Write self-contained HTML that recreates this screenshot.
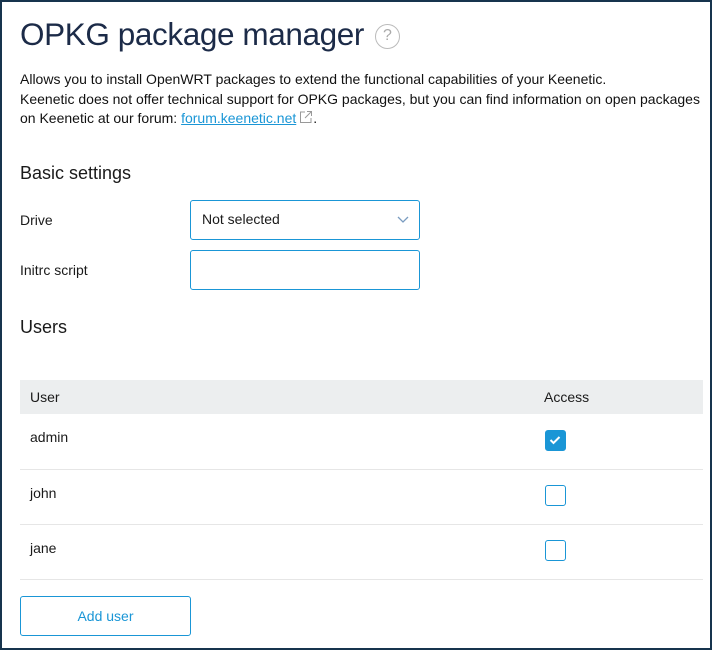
<!DOCTYPE html>
<html><head><meta charset="utf-8"><style>
*{box-sizing:border-box;margin:0;padding:0}
html,body{width:712px;height:650px;overflow:hidden}
body{background:#fff;border:2px solid #17344d;font-family:"Liberation Sans",sans-serif;color:#1a1a1a;position:relative}
.a{position:absolute}
h1{position:absolute;left:18px;top:14px;font-size:31.5px;font-weight:400;color:#1c2b48;letter-spacing:-0.4px;white-space:nowrap}
.q{position:absolute;left:373px;top:22px;width:25px;height:25px;border:1.5px solid #bbb;border-radius:50%;color:#aaa;font-size:16px;text-align:center;line-height:22px}
.p{left:18px;top:68px;font-size:14px;line-height:19.5px;color:#111;white-space:nowrap}
.p a{color:#1a96d6;text-decoration:underline}
h2{position:absolute;font-size:18px;font-weight:400;color:#1a1a1a}
.l{font-size:14px}
.box{position:absolute;left:188px;width:230px;height:40px;border:1px solid #1a96d6;border-radius:3px;font-size:14px;padding:10px 11px}
.th{left:18px;top:378px;width:683px;height:34px;background:#eceeef}
.row{left:18px;width:683px;border-bottom:1px solid #e6e6e6}
.cb{position:absolute;left:543px;width:21px;height:21px;border:1.5px solid #1a96d6;border-radius:3px}
.btn{left:18px;top:594px;width:171px;height:40px;border:1px solid #1a96d6;border-radius:3px;color:#1a96d6;font-size:14px;text-align:center;line-height:38px}
</style></head><body>
<h1>OPKG package manager</h1>
<div class="q">?</div>
<div class="a p">Allows you to install OpenWRT packages to extend the functional capabilities of your Keenetic.<br>Keenetic does not offer technical support for OPKG packages, but you can find information on open packages<br>on Keenetic at our forum: <a>forum.keenetic.net</a><svg width="14" height="14" viewBox="0 0 14 14" style="vertical-align:-1px;margin-left:3px"><path d="M6 2H1.5v10.5H12V8M8 1.5h4.5V6M12.5 1.5 6 8" fill="none" stroke="#999" stroke-width="1"/></svg>.</div>
<h2 style="left:18px;top:161px">Basic settings</h2>
<div class="a l" style="left:18px;top:210px">Drive</div>
<div class="box" style="top:198px">Not selected<svg class="a" style="right:10px;top:15px" width="12" height="8" viewBox="0 0 12 8"><path d="M1 1l5 5 5-5" fill="none" stroke="#7a9cc0" stroke-width="1.3"/></svg></div>
<div class="a l" style="left:18px;top:260px">Initrc script</div>
<div class="box" style="top:248px"></div>
<h2 style="left:18px;top:315px">Users</h2>
<div class="a th"></div>
<div class="a l" style="left:28px;top:387px">User</div>
<div class="a l" style="left:542px;top:387px">Access</div>
<div class="a row" style="top:412px;height:56px"></div>
<div class="a row" style="top:468px;height:55px"></div>
<div class="a row" style="top:523px;height:55px"></div>
<div class="a l" style="left:28px;top:427px">admin</div>
<div class="a l" style="left:28px;top:483px">john</div>
<div class="a l" style="left:28px;top:538px">jane</div>
<div class="cb" style="top:428px;background:#1a96d6"><svg class="a" style="left:3px;top:4px" width="12" height="10" viewBox="0 0 12 10"><path d="M1.5 5l3 3 6-6" fill="none" stroke="#fff" stroke-width="2"/></svg></div>
<div class="cb" style="top:483px"></div>
<div class="cb" style="top:538px"></div>
<div class="a btn">Add user</div>
</body></html>
